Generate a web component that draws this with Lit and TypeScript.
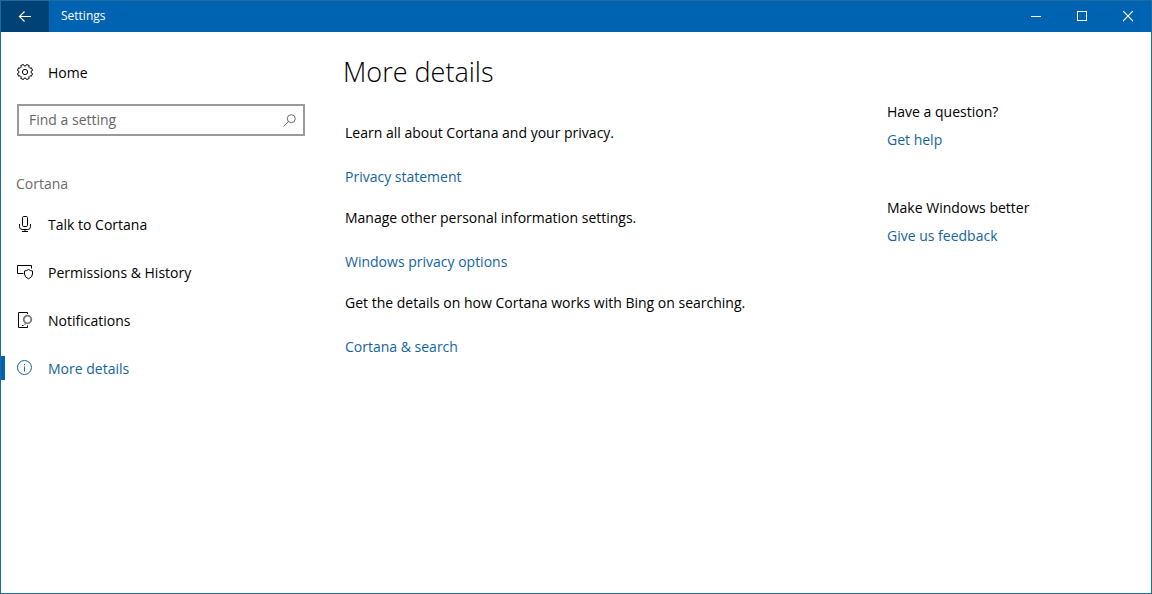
import { LitElement, html, css, svg } from "lit";
import { customElement, state } from "lit/decorators.js";
import { classMap } from "lit/directives/class-map.js";

/** Outline of a toothed wheel centred on (cx, cy). */
function gearPath(cx: number, cy: number, inner: number, outer: number, teeth: number): string {
  const step = (Math.PI * 2) / teeth;
  const points: string[] = [];
  for (let i = 0; i < teeth; i++) {
    const mid = i * step + step / 2;
    for (const [offset, radius] of [[-0.32, inner], [-0.24, outer], [0.24, outer], [0.32, inner]]) {
      const angle = mid + offset * step;
      points.push(`${(cx + radius * Math.cos(angle)).toFixed(2)} ${(cy + radius * Math.sin(angle)).toFixed(2)}`);
    }
  }
  return `M${points.join("L")}Z`;
}

const icons = {
  gear: svg`<path d=${gearPath(8, 8, 6.2, 7.7, 8)} /><circle cx="8" cy="8" r="2.600" />`,
  mic: svg`<rect x="5.500" y="0.500" width="5" height="10" rx="1.200" /><path d="M2.500 8v2.700q0 2.800 2.800 2.800h5.400q2.800 0 2.800-2.800V8M8 13.500v2M5 15.500h6" />`,
  permissions: svg`<path d="M6.500 9.500H0.500V1.500H14.500V4.500" /><path d="M11.500 5.500q-1.600 1.300-4 1.500v3q0 3.200 4 4.800q4-1.600 4-4.800v-3q-2.400-.2-4-1.500Z" />`,
  notifications: svg`<path d="M10.500 2V0.500H1.500V15.500H10.500V13.500M5 13.500h1.500M7.500 12.200h1" /><circle cx="10.500" cy="7.500" r="3.800" stroke-width="1.800" stroke="#777" />`,
  info: svg`<circle cx="7.500" cy="7.500" r="7" /><path d="M7.500 6.500v5M7.500 4v1.200" />`,
};

type IconName = keyof typeof icons;

@customElement("app-root")
export class AppRoot extends LitElement {
  static styles = css`
    :host {
      display: block;
      font-family: "Segoe UI", "Open Sans", "Noto Sans", sans-serif;
      font-size: 14px;
      line-height: 20px;
      color: #000;
    }
    .window {
      box-sizing: border-box;
      min-height: 100vh;
      background: #fff;
      border: 1px solid #1f6a9f;
    }
    .titlebar {
      display: flex;
      height: 31px;
      background: #0063b1;
      color: #fff;
    }
    .titlebar button {
      display: grid;
      place-items: center;
      border: 0;
      padding: 0;
      background: none;
      color: inherit;
      width: 46px;
    }
    .titlebar .back {
      width: 48px;
      background: #004275;
    }
    .caption {
      flex: 1;
      margin: 0;
      padding-left: 12px;
      font-size: 12px;
      line-height: 30px;
      font-weight: 400;
    }
    svg {
      display: block;
      fill: none;
      stroke: currentColor;
    }
    .body {
      display: grid;
      grid-template-columns: 304px minmax(0, 1fr) 264px;
    }
    .sidebar {
      padding-top: 17px;
    }
    .entry {
      display: flex;
      align-items: center;
      gap: 14px;
      height: 48px;
      padding-left: 16px;
      color: inherit;
      text-decoration: none;
      position: relative;
    }
    .entry svg {
      margin-bottom: 1px;
    }
    .entry.active {
      color: #1464a0;
    }
    .entry.active::before {
      content: "";
      position: absolute;
      left: 0;
      top: 11px;
      width: 4px;
      height: 24px;
      background: #0063b1;
    }
    .search {
      display: flex;
      align-items: center;
      box-sizing: border-box;
      height: 32px;
      margin: 7px 0 38px 16px;
      padding: 0 7px 0 10px;
      border: 2px solid #999;
      color: #666;
    }
    .search input {
      flex: 1;
      min-width: 0;
      border: 0;
      padding: 0;
      outline: 0;
      background: none;
      font: inherit;
      color: #000;
    }
    .search input::placeholder {
      color: #666;
      opacity: 1;
    }
    .group {
      margin: 0 0 7px;
      padding-left: 15px;
      font: inherit;
      color: #6b6b6b;
    }
    .list {
      margin: 0;
      padding: 0;
      list-style: none;
    }
    .content {
      padding: 22px 24px 24px 40px;
    }
    .title {
      margin: 0 0 33px -2px;
      font-size: 27px;
      line-height: 36px;
      font-weight: 300;
    }
    .topic {
      margin-bottom: 21px;
    }
    .topic p {
      margin: 0 0 24px;
    }
    .link {
      display: block;
      width: fit-content;
      color: #1464a0;
      text-decoration: none;
    }
    .support {
      padding-top: 70px;
    }
    .support section {
      margin-bottom: 48px;
    }
    .support h2 {
      margin: 0 0 8px;
      font: inherit;
    }
  `;

  @state() private current = "More details";

  private readonly pages: { label: string; icon: IconName }[] = [
    { label: "Talk to Cortana", icon: "mic" },
    { label: "Permissions & History", icon: "permissions" },
    { label: "Notifications", icon: "notifications" },
    { label: "More details", icon: "info" },
  ];

  private readonly topics = [
    { text: "Learn all about Cortana and your privacy.", link: "Privacy statement" },
    { text: "Manage other personal information settings.", link: "Windows privacy options" },
    { text: "Get the details on how Cortana works with Bing on searching.", link: "Cortana & search" },
  ];

  private readonly support = [
    { text: "Have a question?", link: "Get help" },
    { text: "Make Windows better", link: "Give us feedback" },
  ];

  private icon(name: IconName) {
    return html`<svg width="17" height="17" viewBox="0 0 17 17" aria-hidden="true">${icons[name]}</svg>`;
  }

  private select(event: Event, label: string) {
    event.preventDefault();
    this.current = label;
  }

  render() {
    return html`
      <div class="window">
        <header class="titlebar">
          <button class="back" aria-label="Back">
            <svg width="14" height="12" viewBox="0 0 14 12"><path stroke-width="1.2" d="M13 5.500H1.500M6.500 0.500L1.500 5.500L6.500 10.500" /></svg>
          </button>
          <p class="caption">Settings</p>
          <button aria-label="Minimize">
            <svg width="10" height="11" viewBox="0 0 10 11"><path d="M0 5.500H10" /></svg>
          </button>
          <button aria-label="Maximize">
            <svg width="10" height="11" viewBox="0 0 10 11"><rect x="0.500" y="0.500" width="9" height="9" /></svg>
          </button>
          <button aria-label="Close">
            <svg width="10" height="11" viewBox="0 0 10 11"><path stroke-width="1.200" d="M0 0L10 10M10 0L0 10" /></svg>
          </button>
        </header>
        <div class="body">
          <nav class="sidebar">
            <a class="entry" href="#home">${this.icon("gear")}Home</a>
            <div class="search">
              <input type="text" placeholder="Find a setting" aria-label="Find a setting" />
              <svg width="13" height="13" viewBox="0 0 13 13" aria-hidden="true">
                <circle cx="8.300" cy="4.700" r="4" /><path d="M5.400 7.600L0.500 12.500" />
              </svg>
            </div>
            <h2 class="group">Cortana</h2>
            <ul class="list">
              ${this.pages.map(
                (page) => html`<li>
                  <a
                    class=${classMap({ entry: true, active: page.label === this.current })}
                    href="#page"
                    @click=${(e: Event) => this.select(e, page.label)}
                    >${this.icon(page.icon)}${page.label}</a
                  >
                </li>`
              )}
            </ul>
          </nav>
          <main class="content">
            <h1 class="title">${this.current}</h1>
            ${this.topics.map(
              (topic) => html`<section class="topic">
                <p>${topic.text}</p>
                <a class="link" href="#topic">${topic.link}</a>
              </section>`
            )}
          </main>
          <aside class="support">
            ${this.support.map(
              (item) => html`<section>
                <h2>${item.text}</h2>
                <a class="link" href="#support">${item.link}</a>
              </section>`
            )}
          </aside>
        </div>
      </div>
    `;
  }
}
